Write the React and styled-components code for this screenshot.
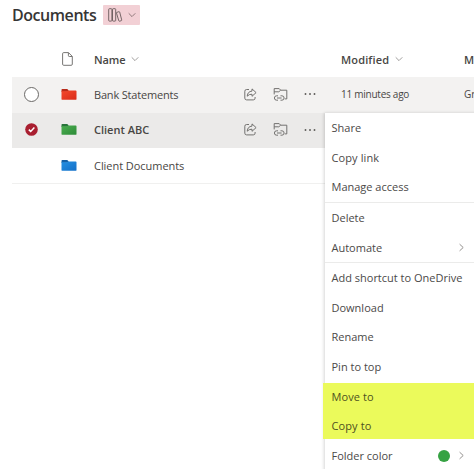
import React from 'react';
import styled, { createGlobalStyle } from 'styled-components';

const Global = createGlobalStyle`
  * { box-sizing: border-box; }
  body { margin: 0; background: #fff; overflow: hidden; }
`;

const Page = styled.main`
  position: relative;
  width: 474px;
  height: 469px;
  overflow: hidden;
  background: #fff;
  color: #454443;
  font-family: "Open Sans", "Noto Sans", sans-serif;
  font-size: 11px;
`;

const TitleBar = styled.header`
  display: flex;
  align-items: center;
  height: 42px;
  padding: 0 0 12px 12px;
`;

const Title = styled.h1`
  margin: 0;
  width: 91px;
  font-size: 16px;
  line-height: 22px;
  font-weight: 600;
  letter-spacing: ${(p) => p.$spacing}px;
  color: #363534;
`;

const ViewButton = styled.button`
  display: flex;
  align-items: center;
  gap: 5px;
  width: 37px;
  height: 20px;
  padding: 0 0 0 5px;
  border: 0;
  border-radius: 1px;
  background: #f2d0d5;
`;

const Table = styled.section`
  display: flex;
  flex-direction: column;
  margin-left: 12px;
`;

const Row = styled.div`
  display: grid;
  grid-template-columns: 39px 43px 145px 30px 30px 42px 123px 60px;
  align-items: center;
  height: ${(p) => p.$height || 35.5}px;
  background: ${(p) => p.$bg || '#fff'};
  border-bottom: 1px solid ${(p) => p.$line || 'transparent'};
  white-space: nowrap;
`;

const Center = styled.span`
  display: flex;
  align-items: center;
  justify-content: ${(p) => (p.$start ? 'flex-start' : 'center')};
  padding-left: ${(p) => p.$inset || 0}px;
`;

const Label = styled.span`
  display: flex;
  align-items: center;
  gap: 6px;
  font-size: ${(p) => p.$size || 11}px;
  font-weight: ${(p) => p.$weight || 400};
  letter-spacing: ${(p) => p.$spacing || 0}px;
  color: #484644;
`;

const Radio = styled.span`
  width: 15px;
  height: 15px;
  border: 1px solid #6b6967;
  border-radius: 50%;
  background: #fff;
`;

const Menu = styled.nav`
  position: absolute;
  left: 325px;
  top: 113px;
  width: 160px;
  height: 370px;
  background: #fff;
  box-shadow: -1px 0 3px rgba(0, 0, 0, 0.16);
`;

const MenuItem = styled.div`
  display: flex;
  align-items: center;
  height: 29.6px;
  padding: 0 19px 0 6.5px;
  font-size: 11px;
  letter-spacing: ${(p) => p.$spacing || 0}px;
  white-space: nowrap;
  color: #4b4948;
`;

const ItemText = styled.span`
  flex: 1;
`;

const Separator = styled.div`
  height: 1px;
  background: #ebebea;
`;

const Highlight = styled.div`
  margin: 1.6px 0 2px -2px;
  padding-left: 2px;
  height: 56px;
  background: #ebfa5b;
  ${MenuItem} { color: #4e5121; height: 30px; }
  ${MenuItem}:first-child { height: 28px; }
`;

const ColorDot = styled.span`
  width: 12px;
  height: 12px;
  margin-right: 7px;
  border-radius: 50%;
  background: #36a243;
`;

const Chevron = ({ right, size = 8, color = '#8f8d8b' }) => (
  <svg width={size} height={size} viewBox="0 0 8 8" fill="none" stroke={color} strokeWidth=".85">
    <path d={right ? 'M2.3 1 5.5 4 2.3 7' : 'M.7 2.3 4 5.6 7.3 2.3'} />
  </svg>
);

const LibraryIcon = () => (
  <svg width="15" height="14" viewBox="0 0 15 14" fill="none" stroke="#68595a" strokeWidth=".9">
    <rect x=".7" y=".7" width="3.2" height="12.4" rx=".7" />
    <rect x="4.5" y=".7" width="3.2" height="12.4" rx=".7" />
    <path d="m8.7 4.4 2.2-.7c.4-.1.7.1.8.4l2 7.8c.1.4-.1.7-.4.8l-1.7.5c-.4.1-.7-.1-.8-.4L8.5 5.1c-.1-.3 0-.6.2-.7Z" />
  </svg>
);

const FileIcon = () => (
  <svg width="11" height="14" viewBox="0 0 11 14" fill="none" stroke="#686664" strokeWidth=".9">
    <path d="M1.7.6h4.8l3.8 3.8v7.8q0 1.1-1.1 1.1H1.7q-1.1 0-1.1-1.1V1.7Q.6.6 1.7.6Z" />
    <path d="M6.4.8v2.8q0 .9.9.9h2.8" />
  </svg>
);

const folderColors = {
  red: ['#f4492d', '#d92c19', '#b72a19'],
  green: ['#4cae50', '#2d8b38', '#28743a'],
  blue: ['#2490e2', '#1470c8', '#1460a5'],
};

const FolderIcon = ({ color }) => {
  const [top, bottom, tab] = folderColors[color];
  return (
    <svg width="16" height="13" viewBox="0 0 16 13">
      <defs>
        <linearGradient id={`folder-${color}`} x2="1" y2="1">
          <stop stopColor={top} />
          <stop offset="1" stopColor={bottom} />
        </linearGradient>
      </defs>
      <path d="M.5 4V1.8Q.5 1 1.3 1h4.6q.4 0 .7.3l.9.9v1.5Z" fill={tab} />
      <path d="M.5 3.3h5.2q.5 0 .9-.4l.5-.5h7.6q.8 0 .8.8v7.7q0 .9-.9.9H1.4q-.9 0-.9-.9Z" fill={`url(#folder-${color})`} />
    </svg>
  );
};

const ShareIcon = () => (
  <svg width="13" height="13" viewBox="0 0 13 13" fill="none" stroke="#6d6b69" strokeWidth=".95" strokeLinejoin="round">
    <path d="M5 1.5H2.6Q.8 1.5.8 3.3v6.8q0 1.8 1.8 1.8h6.7q1.8 0 1.8-1.8V9" />
    <path d="M8 .9 12.1 4.6 8 8.3V6.2Q5 6.1 3.2 8.2 3.6 3.5 8 3.1Z" />
  </svg>
);

const FolderLinkIcon = () => (
  <svg width="15" height="15" viewBox="0 0 15 15" fill="none" stroke="#6d6b69" strokeWidth=".95">
    <path d="M1.2 7.4V1.6h5L7.7 3.2h6.1v8.7h-2M1.2 4.8h4.6l1.9-1.6" strokeLinejoin="round" />
    <path d="M5 8.8H3.6a2.2 2.2 0 0 0 0 4.4H5M7.5 8.8h1.4a2.2 2.2 0 0 1 0 4.4H7.5M4 11h4.6" />
  </svg>
);

const MoreIcon = () => (
  <svg width="12" height="4" viewBox="0 0 12 4" fill="#5c5a58">
    <circle cx="1.5" cy="2" r=".95" />
    <circle cx="6" cy="2" r=".95" />
    <circle cx="10.5" cy="2" r=".95" />
  </svg>
);

const CheckedIcon = () => (
  <svg width="13" height="13" viewBox="0 0 13 13">
    <circle cx="6.5" cy="6.5" r="6.3" fill="#a91f30" />
    <path d="m3.8 6.6 1.9 1.8 3.7-3.8" fill="none" stroke="#fff" strokeWidth="1.5" />
  </svg>
);

const Actions = () => (
  <>
    <Center $start $inset={5}><ShareIcon /></Center>
    <Center $start $inset={4}><FolderLinkIcon /></Center>
    <Center $start $inset={4.5}><MoreIcon /></Center>
  </>
);

const Entry = ({ text, spacing, arrow, dot }) => (
  <MenuItem $spacing={spacing}>
    <ItemText>{text}</ItemText>
    {dot && <ColorDot />}
    {arrow && <Chevron right size={9} />}
  </MenuItem>
);

export default function App() {
  return (
    <Page>
      <Global />
      <TitleBar>
        <Title $spacing={-0.45}>Documents</Title>
        <ViewButton><LibraryIcon /><Chevron color="#806a6d" /></ViewButton>
      </TitleBar>
      <Table>
        <Row $height={35}>
          <span />
          <Center $start $inset={11}><FileIcon /></Center>
          <Label $weight={600} $spacing={-0.1}>Name <Chevron /></Label>
          <span /><span /><span />
          <Label $weight={600} $spacing={0.15}>Modified <Chevron /></Label>
          <Label $weight={600}>Modified By</Label>
        </Row>
        <Row $bg="#f3f2f1">
          <Center><Radio /></Center>
          <Center $start $inset={10}><FolderIcon color="red" /></Center>
          <Label $spacing={-0.18}>Bank Statements</Label>
          <Actions />
          <Label $size={10} $spacing={-0.25}>11 minutes ago</Label>
          <Label $size={10}>Group</Label>
        </Row>
        <Row $bg="#ebeae9">
          <Center><CheckedIcon /></Center>
          <Center $start $inset={10}><FolderIcon color="green" /></Center>
          <Label $weight={600}>Client ABC</Label>
          <Actions />
        </Row>
        <Row $line="#f0f0ef">
          <span />
          <Center $start $inset={10}><FolderIcon color="blue" /></Center>
          <Label $spacing={-0.05}>Client Documents</Label>
        </Row>
      </Table>
      <Menu>
        <Entry text="Share" />
        <Entry text="Copy link" spacing={0.1} />
        <Entry text="Manage access" />
        <Separator />
        <Entry text="Delete" />
        <Entry text="Automate" arrow />
        <Separator />
        <Entry text="Add shortcut to OneDrive" />
        <Entry text="Download" />
        <Entry text="Rename" />
        <Entry text="Pin to top" />
        <Highlight>
          <Entry text="Move to" spacing={0.1} />
          <Entry text="Copy to" spacing={0.1} />
        </Highlight>
        <Entry text="Folder color" arrow dot />
      </Menu>
    </Page>
  );
}
